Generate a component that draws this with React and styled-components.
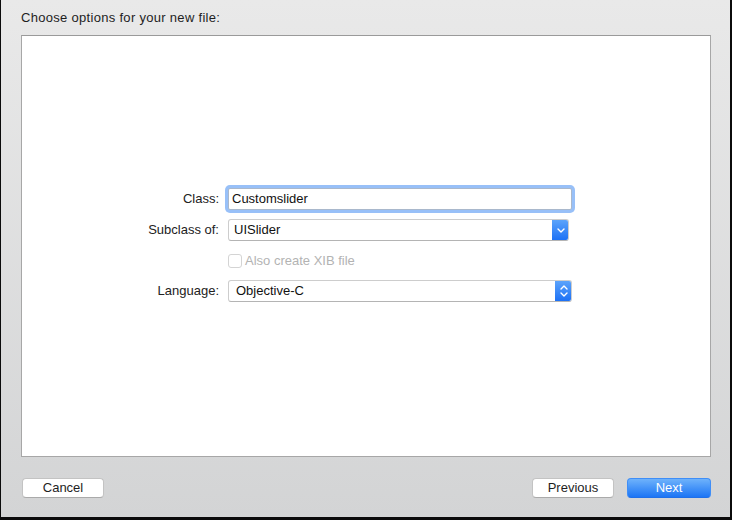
import React from 'react';
import styled, { createGlobalStyle } from 'styled-components';

const GlobalStyle = createGlobalStyle`
  html, body {
    margin: 0;
    padding: 0;
    background: #000;
  }
  body {
    font-family: "Liberation Sans", Arial, sans-serif;
    font-size: 13px;
    -webkit-font-smoothing: antialiased;
  }
`;

const Screen = styled.div`
  width: 732px;
  height: 520px;
  background: #0b0b0b;
  overflow: hidden;
`;

const Sheet = styled.div`
  margin-left: 1px;
  width: 729px;
  height: 517px;
  box-sizing: border-box;
  padding: 0 19px 0 20px;
  background: linear-gradient(#e9e9e9, #d3d4d5);
  display: flex;
  flex-direction: column;
`;

const Title = styled.div`
  padding-top: 10px;
  height: 16px;
  line-height: 16px;
  letter-spacing: 0.3px;
  color: #1e1e1e;
  margin-bottom: 9px;
`;

const Panel = styled.div`
  height: 422px;
  box-sizing: border-box;
  background: #fff;
  border: 1px solid #a7a7a7;
  border-top-color: #9a9a9a;
  padding-top: 152px;
`;

const Form = styled.div`
  display: grid;
  grid-template-columns: 197px 344px;
  grid-template-rows: 22px 22px 22px 22px;
  column-gap: 9px;
  row-gap: 9px;
`;

const Label = styled.div`
  text-align: right;
  line-height: 22px;
  color: #222;
  margin-top: ${p => p.$shift || 0}px;
`;

const Field = styled.div`
  height: 22px;
  box-sizing: border-box;
  border: 1px solid #a9b8cc;
  border-radius: 2px;
  background: #fff;
  box-shadow: 0 0 0 3px rgba(118, 171, 245, 0.75);
  padding-left: 3px;
  line-height: 20px;
  color: #111;
`;

const Popup = styled.div`
  width: ${p => p.$width}px;
  height: 22px;
  margin-top: ${p => p.$shift || 0}px;
  box-sizing: border-box;
  display: flex;
  border: 1px solid #cdcdcd;
  border-bottom-color: #b4b4b4;
  border-radius: 3px;
  background: #fff;
  overflow: hidden;
`;

const PopupText = styled.div`
  flex: 1;
  padding-left: ${p => p.$indent}px;
  line-height: 20px;
  color: #111;
`;

const PopupArrow = styled.div`
  width: 17px;
  margin: -1px -1px -1px 0;
  background: linear-gradient(#5fa6fb, #1a6ff5);
  display: flex;
  align-items: center;
  justify-content: center;
`;

const CheckRow = styled.div`
  display: flex;
  align-items: center;
  gap: 3px;
  color: #b3b3b3;
  margin-top: -1px;
`;

const CheckBox = styled.div`
  width: 14px;
  height: 14px;
  box-sizing: border-box;
  border: 1px solid #d4d4d4;
  border-radius: 3px;
  background: #fff;
`;

const Footer = styled.div`
  display: flex;
  align-items: center;
  margin-top: 21px;
  padding-left: 1px;
`;

const Spacer = styled.div`
  flex: 1;
`;

const Button = styled.button`
  width: ${p => p.$width}px;
  height: 20px;
  box-sizing: border-box;
  margin-left: ${p => p.$gap || 0}px;
  padding: 0;
  font: inherit;
  line-height: 18px;
  border-radius: 4px;
  border: 1px solid ${p => (p.$primary ? '#3f8ef7' : '#c3c3c3')};
  border-bottom-color: ${p => (p.$primary ? '#1f6fe8' : '#aaa')};
  background: ${p => (p.$primary ? 'linear-gradient(#6eb2fb, #1c75f5)' : '#fff')};
  color: ${p => (p.$primary ? '#fff' : '#1e1e1e')};
`;

const Chevron = ({ up }) => (
  <svg width="8" height="5" viewBox="0 0 8 5">
    <path
      d={up ? 'M1 4 L4 1 L7 4' : 'M1 1 L4 4 L7 1'}
      fill="none"
      stroke="#fff"
      strokeWidth="1.4"
      strokeLinecap="round"
      strokeLinejoin="round"
    />
  </svg>
);

const DoubleChevron = styled.div`
  display: flex;
  flex-direction: column;
  gap: 2px;
`;

const App = () => (
  <>
    <GlobalStyle />
    <Screen>
      <Sheet>
        <Title>Choose options for your new file:</Title>
        <Panel>
          <Form>
            <Label>Class:</Label>
            <Field>Customslider</Field>

            <Label>Subclass of:</Label>
            <Popup $width={341}>
              <PopupText $indent={5}>UISlider</PopupText>
              <PopupArrow>
                <Chevron />
              </PopupArrow>
            </Popup>

            <div />
            <CheckRow>
              <CheckBox />
              Also create XIB file
            </CheckRow>

            <Label $shift={-1}>Language:</Label>
            <Popup $width={344} $shift={-1}>
              <PopupText $indent={7}>Objective-C</PopupText>
              <PopupArrow>
                <DoubleChevron>
                  <Chevron up />
                  <Chevron />
                </DoubleChevron>
              </PopupArrow>
            </Popup>
          </Form>
        </Panel>
        <Footer>
          <Button $width={82}>Cancel</Button>
          <Spacer />
          <Button $width={82}>Previous</Button>
          <Button $width={84} $gap={13} $primary>
            Next
          </Button>
        </Footer>
      </Sheet>
    </Screen>
  </>
);

export default App;
